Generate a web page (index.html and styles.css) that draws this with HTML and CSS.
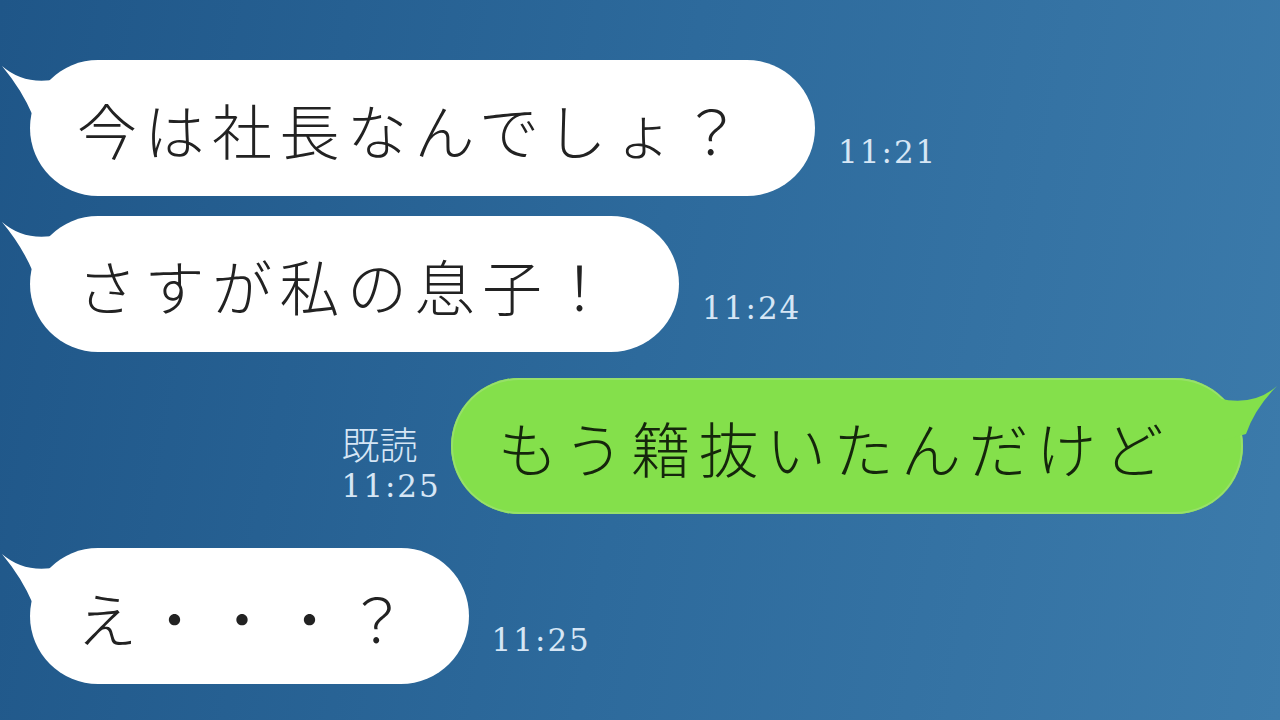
FILE: index.html
```html
<!DOCTYPE html>
<html lang="ja">
<head>
    <meta charset="UTF-8">
    <meta name="viewport" content="width=device-width, initial-scale=1.0">
    <title>トーク</title>
    <link rel="stylesheet" href="styles.css">
</head>
<body>
    <div class="chat">
        <!-- 相手からのメッセージ -->
        <div class="row row-left first">
            <div class="bubble bubble-white">
                <svg class="tail tail-left" viewBox="0 0 60 70" width="60" height="70"><path d="M2 6 Q26 27 62 18 L62 64 L33 56 Q22 30 2 6 Z"/></svg>
                <span class="text">今は社長なんでしょ？</span>
            </div>
            <span class="time">11:21</span>
        </div>

        <div class="row row-left second">
            <div class="bubble bubble-white">
                <svg class="tail tail-left" viewBox="0 0 60 70" width="60" height="70"><path d="M2 6 Q26 27 62 18 L62 64 L33 56 Q22 30 2 6 Z"/></svg>
                <span class="text">さすが私の息子！</span>
            </div>
            <span class="time">11:24</span>
        </div>

        <!-- 自分のメッセージ -->
        <div class="row row-right third">
            <div class="meta">
                <span class="read">既読</span>
                <span class="time">11:25</span>
            </div>
            <div class="bubble bubble-green">
                <svg class="tail tail-right" viewBox="0 0 60 70" width="60" height="70"><path d="M58 8 Q34 29 -2 20 L-2 64 L27 56 Q36 30 58 8 Z"/></svg>
                <span class="text">もう籍抜いたんだけど</span>
            </div>
        </div>

        <div class="row row-left fourth">
            <div class="bubble bubble-white short">
                <svg class="tail tail-left" viewBox="0 0 60 70" width="60" height="70"><path d="M2 6 Q26 27 62 18 L62 64 L33 56 Q22 30 2 6 Z"/></svg>
                <span class="text">え・・・？</span>
            </div>
            <span class="time">11:25</span>
        </div>
    </div>
</body>
</html>
```

FILE: styles.css
```css
/* Page */
body {
    margin: 0;
    width: 1280px;
    height: 720px;
    overflow: hidden;
    background: linear-gradient(100deg, #1f5688 0%, #2d6a9c 50%, #3c7bab 100%);
    font-family: "Noto Sans CJK JP", "Noto Sans", sans-serif;
}

.chat {
    display: flex;
    flex-direction: column;
    padding-top: 60px;
}

/* Message rows */
.row {
    display: flex;
    align-items: flex-end;
}

.row-left {
    padding-left: 30px;
}

.row-right {
    justify-content: flex-end;
    padding-right: 37px;
}

.second { margin-top: 20px; }
.third { margin-top: 26px; }
.fourth { margin-top: 34px; }

/* Bubbles */
.bubble {
    position: relative;
    display: flex;
    align-items: center;
    height: 136px;
    padding: 0 62px 0 47px;
    border-radius: 68px;
    box-sizing: border-box;
}

.first .bubble {
    padding-right: 66px;
}

.bubble.short {
    padding-right: 54px;
}

.bubble-white {
    background-color: #fff;
    color: #222;
}

.bubble-green {
    padding-right: 72px;
    background-color: #84e04b;
    box-shadow: inset 0 0 0 2px #97e069;
    color: #15260c;
}

.text {
    font-size: 60px;
    font-weight: 300;
    letter-spacing: 7.5px;
    line-height: 1;
    white-space: nowrap;
    padding-top: 2px;
}

/* Bubble tails */
.tail {
    position: absolute;
    top: 0;
}

.tail-left {
    left: -30px;
    fill: #fff;
}

.tail-right {
    right: -36px;
    fill: #84e04b;
}

/* Timestamps */
.time {
    font-family: "DejaVu Serif", serif;
    font-size: 31px;
    line-height: 1;
    color: #d6e6f5;
    letter-spacing: 2px;
}

.row-left .time {
    margin-left: 23px;
    padding-bottom: 28px;
}

.meta {
    display: flex;
    flex-direction: column;
    margin-right: 10px;
    padding-bottom: 12px;
}

.read {
    font-size: 38px;
    font-weight: 300;
    line-height: 1;
    color: #d6e6f5;
    margin-bottom: 9px;
}
```
